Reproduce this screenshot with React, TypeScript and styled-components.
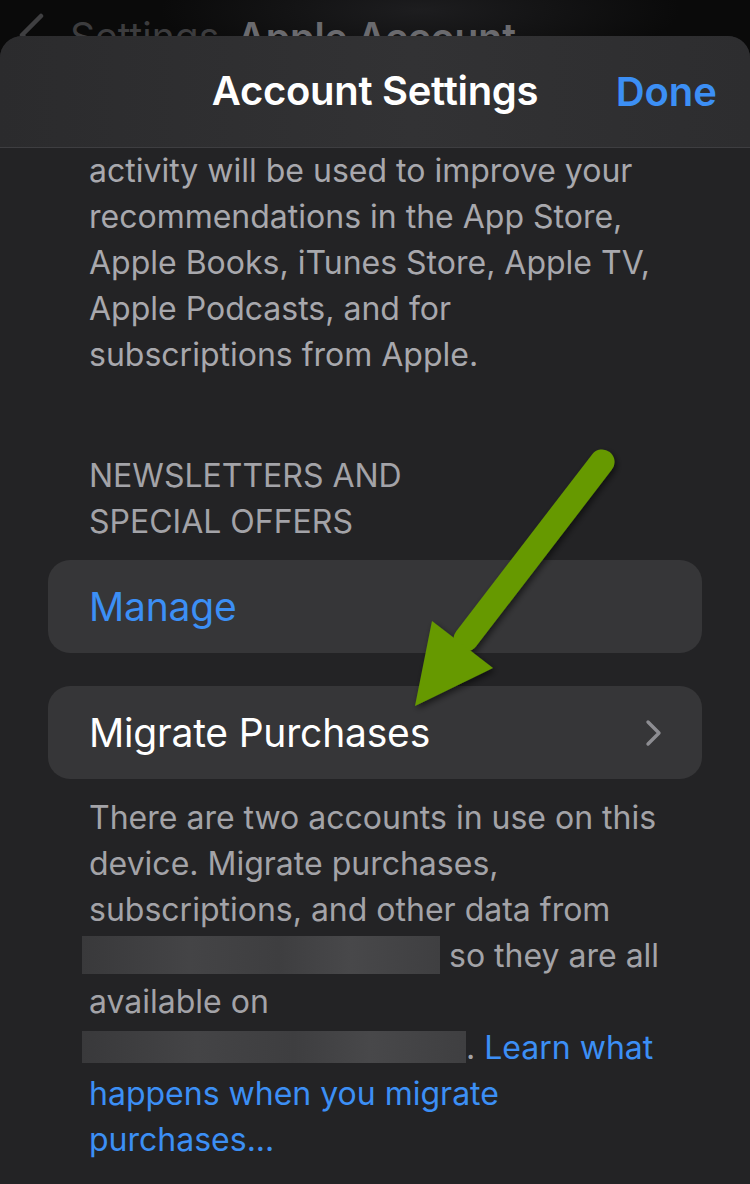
import React from "react";
import styled, { createGlobalStyle } from "styled-components";

const GlobalStyle = createGlobalStyle`
    html, body {
        margin: 0;
        padding: 0;
        background: #0a0a0a;
    }
    body {
        font-family: Inter, "Noto Sans", "Liberation Sans", sans-serif;
        -webkit-font-smoothing: antialiased;
    }
`

const ChevronRight: React.FC = () => (
    <svg width="18" height="28" viewBox="0 0 18 28" fill="none">
        <path d="M3 3 L14 14 L3 25" stroke="#8d8d92" strokeWidth="3.4" strokeLinecap="round" strokeLinejoin="round" />
    </svg>
)

const BackChevron: React.FC = () => (
    <svg width="28" height="46" viewBox="0 0 28 46" fill="none">
        <path d="M24 4 L5 23 L24 42" stroke="#3f3f41" strokeWidth="4.5" strokeLinecap="round" strokeLinejoin="round" />
    </svg>
)

// green annotation arrow pointing at the migrate row
const Arrow: React.FC = () => (
    <svg width="260" height="300" viewBox="0 0 260 300">
        <defs>
            <filter id="arrowShadow" x="-20%" y="-20%" width="140%" height="140%">
                <feDropShadow dx="2" dy="3" stdDeviation="3" floodColor="#000" floodOpacity="0.55" />
            </filter>
        </defs>
        <g filter="url(#arrowShadow)" fill="#669900">
            <path d="M222 22 L86 199" stroke="#669900" strokeWidth="25" strokeLinecap="round" />
            <polygon points="52 181, 113 228, 35 266" />
        </g>
    </svg>
)

const App: React.FC = () => {
    return (
        <>
            <GlobalStyle />
            <Screen>
                <BackNav>
                    <BackChevron />
                    <BackLabel>Settings</BackLabel>
                    <BackTitle>Apple Account</BackTitle>
                </BackNav>
                <Sheet>
                    <SheetHeader>
                        <SheetTitle>Account Settings</SheetTitle>
                        <DoneButton>Done</DoneButton>
                    </SheetHeader>
                    <SheetBody>
                        <Paragraph>
                            activity will be used to improve your<br />
                            recommendations in the App Store,<br />
                            Apple Books, iTunes Store, Apple TV,<br />
                            Apple Podcasts, and for<br />
                            subscriptions from Apple.
                        </Paragraph>
                        <SectionHeader>
                            NEWSLETTERS AND<br />
                            SPECIAL OFFERS
                        </SectionHeader>
                        <Row>
                            <RowLabel $link>Manage</RowLabel>
                        </Row>
                        <Row $gap={33}>
                            <RowLabel>Migrate Purchases</RowLabel>
                            <ChevronRight />
                        </Row>
                        <Footer>
                            There are two accounts in use on this<br />
                            device. Migrate purchases,<br />
                            subscriptions, and other data from<br />
                            <Redacted $w={358} $h={38} /> so they are all<br />
                            available on<br />
                            <Redacted $w={384} $h={32} />. <Link>Learn what<br />
                            happens when you migrate<br />
                            purchases...</Link>
                        </Footer>
                        <ArrowLayer>
                            <Arrow />
                        </ArrowLayer>
                    </SheetBody>
                </Sheet>
            </Screen>
        </>
    )
}

const Screen = styled.div`
    display: flex;
    flex-direction: column;
    width: 750px;
    height: 1184px;
    overflow: hidden;
    background: radial-gradient(ellipse 260px 60px at 420px 10px, #1d1d1f 0%, #0a0a0a 100%);
`

const BackNav = styled.div`
    display: flex;
    align-items: flex-start;
    height: 36px;
    overflow: hidden;
    padding: 0 0 0 17px;
    box-sizing: border-box;

    svg {
        margin-top: 12px;
        margin-right: 25px;
        flex-shrink: 0;
    }
`

const BackLabel = styled.span`
    font-size: 39px;
    line-height: 48px;
    margin-top: 13px;
    color: #3c3c3e;
    margin-right: 18px;
    white-space: nowrap;
`

const BackTitle = styled.span`
    font-size: 39px;
    line-height: 48px;
    margin-top: 13px;
    font-weight: 600;
    color: #6a6a6e;
    white-space: nowrap;
`

const Sheet = styled.div`
    flex: 1;
    display: flex;
    flex-direction: column;
    border-radius: 22px 22px 0 0;
    overflow: hidden;
    background: #232325;
`

const SheetHeader = styled.div`
    display: flex;
    align-items: center;
    justify-content: center;
    position: relative;
    height: 112px;
    flex-shrink: 0;
    background: linear-gradient(90deg, #2b2b2d 0%, #323234 55%, #2d2d2f 100%);
    border-bottom: 1.5px solid #3e3e41;
    box-sizing: border-box;
    padding-bottom: 2px;
`

const SheetTitle = styled.h1`
    margin: 0;
    font-size: 40px;
    font-weight: 600;
    color: #ffffff;
    letter-spacing: -0.3px;
`

const DoneButton = styled.button`
    position: absolute;
    right: 33px;
    top: 50%;
    transform: translateY(-50%);
    margin-top: -1px;
    border: none;
    background: none;
    padding: 0;
    font-family: inherit;
    font-size: 40px;
    font-weight: 600;
    color: #3c8ff5;
    cursor: pointer;
`

const SheetBody = styled.div`
    position: relative;
    display: flex;
    flex-direction: column;
    padding: 0 48px;
`

const Paragraph = styled.p`
    margin: 0;
    padding: 0 41px;
    font-size: 32px;
    line-height: 46px;
    color: #a8a8ad;
    white-space: nowrap;
`

const SectionHeader = styled.div`
    margin-top: 75px;
    padding: 0 41px;
    font-size: 32px;
    line-height: 46px;
    color: #a3a3a8;
    white-space: nowrap;
`

const Row = styled.div<{ $gap?: number }>`
    display: flex;
    align-items: center;
    justify-content: space-between;
    height: 93px;
    margin-top: ${p => p.$gap ?? 15}px;
    padding: 0 39px 0 41px;
    border-radius: 22px;
    background: #363638;
`

const RowLabel = styled.span<{ $link?: boolean }>`
    font-size: 39px;
    color: ${p => p.$link ? "#3c8ff5" : "#ffffff"};
    letter-spacing: -0.2px;
`

const Footer = styled.p`
    margin: 16px 0 0;
    padding: 0 41px;
    font-size: 32px;
    line-height: 46px;
    color: #a3a3a8;
    white-space: nowrap;
`

const Redacted = styled.span<{ $w: number, $h: number }>`
    display: inline-block;
    vertical-align: middle;
    width: ${p => p.$w}px;
    height: ${p => p.$h}px;
    margin-left: -7px;
    margin-top: -6px;
    background: linear-gradient(90deg, #39393b 0%, #444446 30%, #3e3e40 55%, #48484a 75%, #3f3f41 100%);
    filter: blur(0.6px);
`

const Link = styled.span`
    color: #3c8ff5;
`

const ArrowLayer = styled.div`
    position: absolute;
    left: 380px;
    top: 292px;
    pointer-events: none;
`

export default App;
